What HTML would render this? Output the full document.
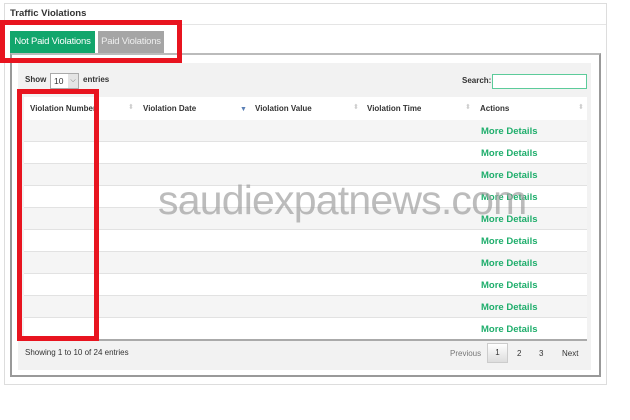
<!DOCTYPE html>
<html><head><style>
*{margin:0;padding:0;box-sizing:border-box}
body{width:630px;height:420px;background:#fff;font-family:"Liberation Sans",Arial,sans-serif;position:relative;overflow:hidden;color:#333}
.a{position:absolute;white-space:nowrap}
.outer{left:4px;top:3px;width:603px;height:382px;border:1px solid #ddd}
.title{left:10px;top:8px;font-size:9.5px;font-weight:bold;color:#333}
.hl{left:5px;top:24px;width:601px;height:1px;background:#e5e5e5}
.inner{left:10px;top:53px;width:591px;height:324px;border:2px solid #999;border-top-color:#bbb}
.gray{left:18px;top:63px;width:573px;height:307px;background:#f2f2f2}
.tab{top:31px;height:22px;font-size:9.5px;color:#fff;line-height:22px;text-align:center;letter-spacing:-0.2px}
.th{top:97px;height:23px;font-size:8px;font-weight:bold;line-height:23px;color:#333}
.row{left:24px;width:563px;height:22px;border-bottom:1px solid #e2e2e2}
.md{left:481px;font-size:9.5px;font-weight:bold;color:#1fae6c}
.sa{font-size:7px;color:#ccc;top:103px}
.red{border:5px solid #e8141f}
</style></head><body>
<div class="a outer"></div>
<div class="a title">Traffic Violations</div>
<div class="a hl"></div>
<div class="a inner"></div>
<div class="a gray"></div>
<div class="a tab" style="left:10px;width:85px;background:#12a66c">Not Paid Violations</div>
<div class="a tab" style="left:98px;width:66px;background:#a5a5a5;color:#eee">Paid Violations</div>
<div class="a" style="left:25px;top:75px;font-size:8px;font-weight:bold">Show</div>
<div class="a" style="left:50px;top:73px;width:29px;height:16px;border:1px solid #aaa;background:#fff;font-size:8.5px;padding:2px 3px">10</div>
<div class="a" style="left:68px;top:74px;width:10px;height:14px;background:#e4e4e4;font-size:7px;color:#666;text-align:center;line-height:13px">⌵</div>
<div class="a" style="left:83px;top:75px;font-size:8px;font-weight:bold">entries</div>
<div class="a" style="left:462px;top:76px;font-size:8px;font-weight:bold">Search:</div>
<div class="a" style="left:492px;top:74px;width:95px;height:15px;border:1px solid #5ccb9a;background:#fff"></div>
<div class="a" style="left:24px;top:97px;width:563px;height:23px;background:#fff"></div>
<div class="a th" style="left:30px">Violation Number</div>
<div class="a th" style="left:143px">Violation Date</div>
<div class="a th" style="left:255px">Violation Value</div>
<div class="a th" style="left:367px">Violation Time</div>
<div class="a th" style="left:480px">Actions</div>
<div class="a sa" style="left:128px">⬍</div>
<div class="a" style="left:240px;top:106px;font-size:7px;color:#5a7fb5">▼</div>
<div class="a sa" style="left:353px">⬍</div>
<div class="a sa" style="left:465px">⬍</div>
<div class="a sa" style="left:578px">⬍</div>
<div class="a row" style="top:120px;background:#f5f5f5"></div><div class="a md" style="top:126px">More Details</div>
<div class="a row" style="top:142px;background:#fff"></div><div class="a md" style="top:148px">More Details</div>
<div class="a row" style="top:164px;background:#f5f5f5"></div><div class="a md" style="top:170px">More Details</div>
<div class="a row" style="top:186px;background:#fff"></div><div class="a md" style="top:192px">More Details</div>
<div class="a row" style="top:208px;background:#f5f5f5"></div><div class="a md" style="top:214px">More Details</div>
<div class="a row" style="top:230px;background:#fff"></div><div class="a md" style="top:236px">More Details</div>
<div class="a row" style="top:252px;background:#f5f5f5"></div><div class="a md" style="top:258px">More Details</div>
<div class="a row" style="top:274px;background:#fff"></div><div class="a md" style="top:280px">More Details</div>
<div class="a row" style="top:296px;background:#f5f5f5"></div><div class="a md" style="top:302px">More Details</div>
<div class="a row" style="top:318px;background:#fff;height:23px;border-bottom:2px solid #aaa"></div><div class="a md" style="top:324px">More Details</div>
<div class="a" style="left:25px;top:348px;font-size:8px;color:#333">Showing 1 to 10 of 24 entries</div>
<div class="a" style="left:450px;top:349px;font-size:8px;color:#777">Previous</div>
<div class="a" style="left:487px;top:343px;width:21px;height:20px;border:1px solid #ccc;background:linear-gradient(#fff,#ddd);font-size:8px;text-align:center;line-height:18px">1</div>
<div class="a" style="left:517px;top:349px;font-size:8px">2</div>
<div class="a" style="left:539px;top:349px;font-size:8px">3</div>
<div class="a" style="left:562px;top:349px;font-size:8px">Next</div>
<div class="a" style="left:158px;top:177px;font-size:41px;color:rgba(160,160,160,0.7);letter-spacing:-0.8px">saudiexpatnews.com</div>
<div class="a red" style="left:0;top:20px;width:182px;height:43px"></div>
<div class="a red" style="left:17px;top:89px;width:82px;height:252px"></div>
</body></html>
